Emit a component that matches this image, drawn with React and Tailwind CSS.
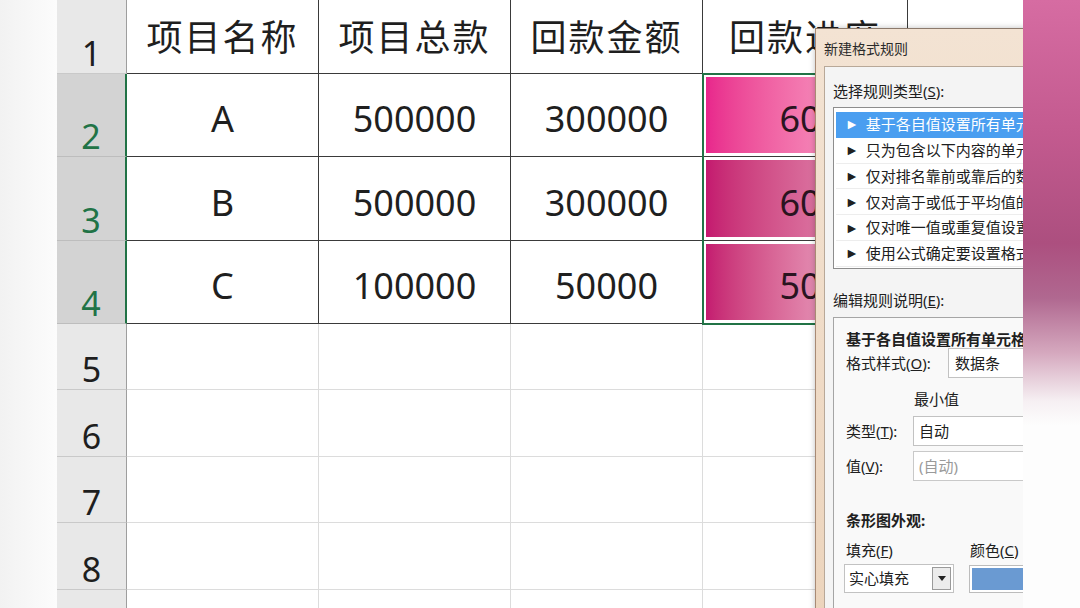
import React from "react";

const rows = [
  { name: "A", total: "500000", paid: "300000", pct: 60, bar: "from-[#e8268c] to-[#f7b8d8]" },
  { name: "B", total: "500000", paid: "300000", pct: 60, bar: "from-[#c4186f] to-[#e6a4c6]" },
  { name: "C", total: "100000", paid: "50000", pct: 50, bar: "from-[#c41a70] to-[#ecb6d2]" },
];

const ruleTypes = [
  "基于各自值设置所有单元格的格式",
  "只为包含以下内容的单元格设置格式",
  "仅对排名靠前或靠后的数值设置格式",
  "仅对高于或低于平均值的数值设置格式",
  "仅对唯一值或重复值设置格式",
  "使用公式确定要设置格式的单元格",
];

const cjk = "font-['Noto_Sans','Noto_Sans_CJK_SC',sans-serif]";

const RowHead = ({ n, active }) => (
  <div
    className={`flex items-end justify-center pb-[3px] text-[34px] leading-none border-b ${
      active
        ? "bg-[#d3d3d3] text-[#217346] border-r-2 border-r-[#217346] border-b-[#bdbdbd]"
        : "bg-[#e8e8e8] text-[#1e1e1e] border-r border-r-[#9e9e9e] border-b-[#c9c9c9]"
    }`}
  >
    {n}
  </div>
);

const Cell = ({ children, dark }) => (
  <div
    className={`flex items-center justify-center pt-[8px] text-[36px] text-[#1f1f1f] border-r border-b ${
      dark ? "border-[#3a3a3a]" : "border-[#dcdcdc]"
    }`}
  >
    {children}
  </div>
);

const Key = ({ k }) => <span className="underline">{k}</span>;

const Dialog = () => (
  <div className="absolute left-[758px] top-[28px] w-[320px] h-[600px] bg-gradient-to-b from-[#f3e3d3] to-[#ecd4bc] border border-[#8c7a6c] border-l-[#a88a74] shadow-[0_0_6px_rgba(0,0,0,0.25)] pl-[8px] text-[15px] text-[#202020]">
    <div className="h-[37px] flex items-center pt-[1px] text-[14px] text-[#2a2a2a]">新建格式规则</div>
    <div className="h-full bg-[#f4f4f4] border border-[#b8a898] pl-[8px] pt-[17px]">
      <div className="leading-none">
        选择规则类型(<Key k="S" />):
      </div>
      <div className="mt-[8px] h-[162px] bg-white border border-[#8d8d8d] px-[2px] pt-[4px]">
        {ruleTypes.map((t, i) => (
          <div
            key={t}
            className={`h-[25.8px] flex items-center gap-[7px] pl-[9px] whitespace-nowrap border-b ${
              i === 0 ? "bg-[#4a9ef0] text-white border-[#4a9ef0]" : "border-[#ededed]"
            }`}
          >
            <span className="text-[14px] leading-none">►</span>
            <span>{t}</span>
          </div>
        ))}
      </div>
      <div className="mt-[24px] leading-none">
        编辑规则说明(<Key k="E" />):
      </div>
      <div className="mt-[9px] h-[320px] bg-[#f9f9f9] border border-[#a5a5a5] pl-[12px] pt-[14px]">
        <div className="font-bold leading-none">基于各自值设置所有单元格的格式:</div>
        <div className="mt-[1px] flex items-center gap-[10px]">
          <span className="w-[92px]">
            格式样式(<Key k="O" />):
          </span>
          <div className="h-[30px] w-[150px] bg-white border border-[#c2c2c2] flex items-center pl-[6px]">数据条</div>
        </div>
        <div className="mt-[14px] pl-[68px] leading-none">最小值</div>
        <div className="mt-[9px] flex items-center gap-[7px]">
          <span className="w-[60px]">
            类型(<Key k="T" />):
          </span>
          <div className="h-[30px] w-[150px] bg-white border border-[#c2c2c2] flex items-center pl-[5px]">自动</div>
        </div>
        <div className="mt-[5px] flex items-center gap-[7px]">
          <span className="w-[60px]">
            值(<Key k="V" />):
          </span>
          <div className="h-[30px] w-[150px] bg-white border border-[#c9c9c9] flex items-center pl-[5px] text-[#9a9a9a]">(自动)</div>
        </div>
        <div className="mt-[32px] font-bold leading-none">条形图外观:</div>
        <div className="mt-[15px] flex leading-none">
          <span className="w-[124px]">
            填充(<Key k="F" />)
          </span>
          <span>
            颜色(<Key k="C" />)
          </span>
        </div>
        <div className="mt-[6px] flex items-center -ml-[2px]">
          <div className="h-[29px] w-[110px] bg-white border border-[#c2c2c2] flex items-center justify-between pl-[4px] pr-[2px]">
            <span>实心填充</span>
            <span className="w-[19px] h-[23px] bg-[#ececec] border border-[#9a9a9a] flex items-center justify-center">
              <svg width="8" height="5" viewBox="0 0 8 5">
                <path d="M0 0h8L4 5z" fill="#222" />
              </svg>
            </span>
          </div>
          <div className="ml-[15px] h-[28px] w-[90px] border border-[#bcbcbc] p-[2px] bg-white">
            <div className="h-full bg-[#6a9ad2]" />
          </div>
        </div>
      </div>
    </div>
  </div>
);

export default function App() {
  const maxPct = Math.max(...rows.map((r) => r.pct));

  return (
    <div className={`w-[1080px] h-[608px] flex overflow-hidden bg-white ${cjk}`}>
      <div className="w-[57px] h-full bg-gradient-to-r from-[#f2f2f2] to-[#fcfcfc]" />

      <div className="relative flex-1 h-full overflow-hidden">
        <div className="grid grid-cols-[70px_192px_192px_192px_205px_1fr] grid-rows-[74px_83px_84px_83px_66px_67px_66px_67px_66px]">
          <RowHead n="1" />
          {["项目名称", "项目总款", "回款金额", "回款进度"].map((h) => (
            <div key={h} className="flex items-center justify-center pt-[2px] text-[36px] tracking-[2px] text-[#1f1f1f] border-r border-b border-[#3a3a3a]">
              {h}
            </div>
          ))}
          <div className="border-b border-[#dcdcdc]" />

          {rows.map((r, i) => (
            <React.Fragment key={r.name}>
              <RowHead n={i + 2} active />
              <Cell dark>{r.name}</Cell>
              <Cell dark>{r.total}</Cell>
              <Cell dark>{r.paid}</Cell>
              <div className="relative border-r border-b border-[#3a3a3a] p-[3px]">
                <div
                  className={`h-full bg-gradient-to-r ${r.bar}`}
                  style={{ width: `${(r.pct / maxPct) * 100}%` }}
                />
                <div className="absolute inset-0 flex items-center justify-center pl-[20px] pt-[8px] text-[36px] text-[#2a1420]">
                  {r.pct}%
                </div>
              </div>
              <div className="border-b border-[#dcdcdc]" />
            </React.Fragment>
          ))}

          {[5, 6, 7, 8, ""].map((n, i) => (
            <React.Fragment key={i}>
              <RowHead n={n} />
              <Cell />
              <Cell />
              <Cell />
              <Cell />
              <div className="border-b border-[#dcdcdc]" />
            </React.Fragment>
          ))}
        </div>

        {/* selected range D2:D4 */}
        <div className="absolute left-[645px] top-[73px] w-[207px] h-[252px] border-2 border-[#217346] pointer-events-none" />

        <Dialog />
      </div>

      <div className="w-[57px] h-full bg-[linear-gradient(to_bottom,#d66ca2_0%,#c35a8f_22%,#ac4f7f_40%,#b06890_49%,#d5a8be_58%,#f6f0f3_66%,#fdfdfd_70%,#fdfdfd_100%)]" />
    </div>
  );
}
